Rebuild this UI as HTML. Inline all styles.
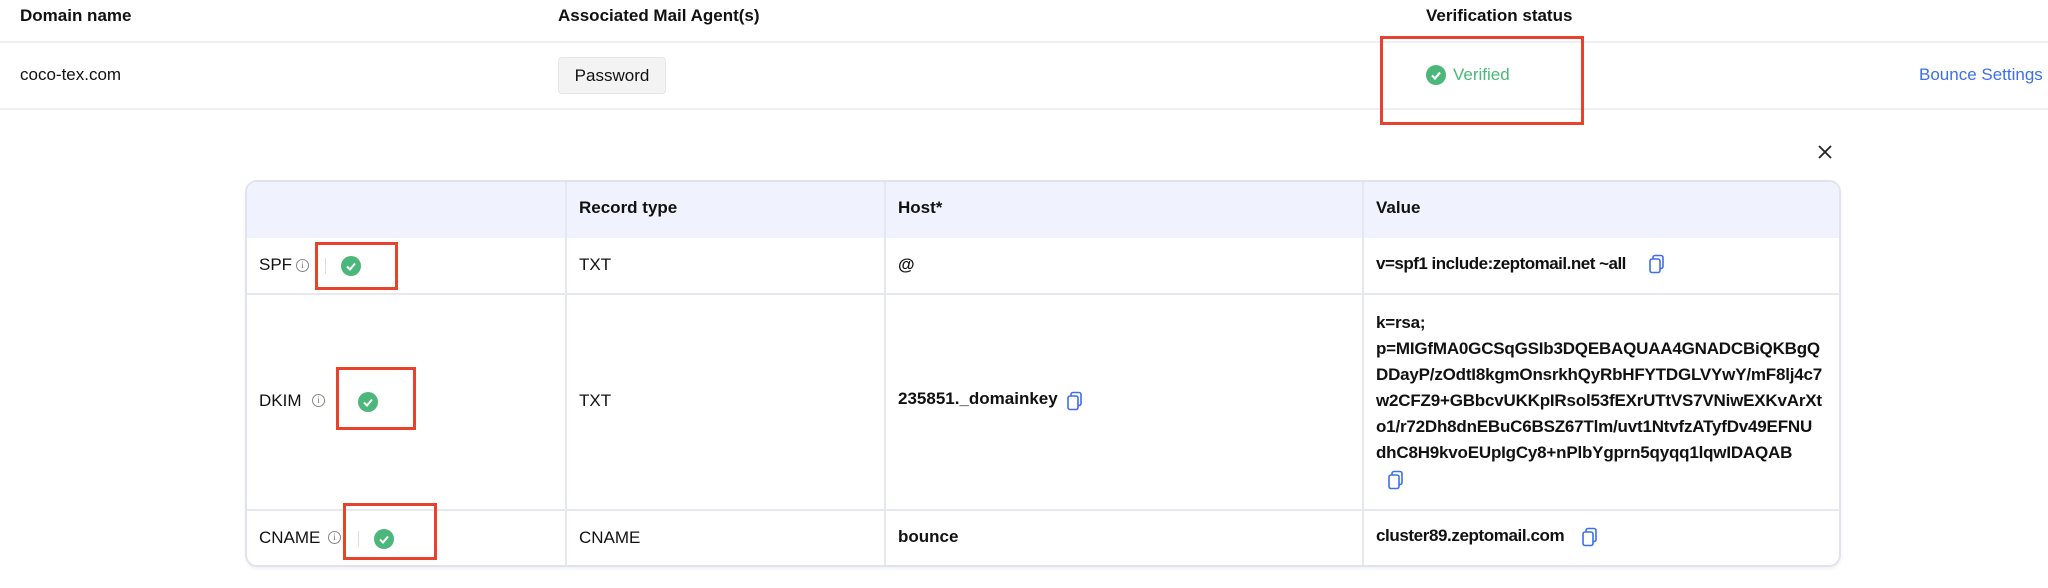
<!DOCTYPE html>
<html><head><meta charset="utf-8"><style>
body{margin:0;width:2048px;height:588px;background:#fff;font-family:"Liberation Sans",sans-serif;color:#111;position:relative;overflow:hidden;font-size:17px}
.a{position:absolute;white-space:nowrap}
.b{font-weight:bold}
.hl{position:absolute;left:0;width:2048px;height:2px;background:#eeeff2}
.red{position:absolute;border:3px solid #e8412c;box-sizing:border-box}
.chk{position:absolute;width:20px;height:20px;border-radius:50%;background:#4cb77a}
.chk svg{position:absolute;left:0;top:0}
.tbl{position:absolute;left:245px;top:180px;width:1596px;height:387px;border:2px solid #e1e4ee;border-radius:12px;box-sizing:border-box;overflow:hidden;box-shadow:0 2px 3px rgba(0,0,0,.06)}
.th{position:absolute;left:0;top:0;width:100%;height:56px;background:#f0f3fd}
.vl{position:absolute;top:0;width:2px;height:100%;background:#e6e8f0}
.rl{position:absolute;left:0;width:100%;height:2px;background:#e8e9ee}
.info{position:absolute;width:11px;height:11px;border:1px solid #888;border-radius:50%;font-size:9px;line-height:11px;text-align:center;color:#777;font-family:"Liberation Serif",serif}
.sep{position:absolute;width:1px;height:16px;background:#ddd}
</style></head><body>
<div class="a b" style="left:20px;top:6px">Domain name</div>
<div class="a b" style="left:558px;top:6px">Associated Mail Agent(s)</div>
<div class="a b" style="left:1426px;top:6px">Verification status</div>
<div class="hl" style="top:41px"></div>
<div class="a" style="left:20px;top:65px">coco-tex.com</div>
<div class="a" style="left:558px;top:57px;width:108px;height:37px;background:#f3f3f3;border:1px solid #e6e6e6;border-radius:4px;box-sizing:border-box;text-align:center;line-height:35px">Password</div>
<div class="chk" style="left:1426px;top:65px"><svg width="20" height="20"><path d="M6 10.5l3 3 5-6" stroke="#fff" stroke-width="2.2" fill="none"/></svg></div>
<div class="a" style="left:1453px;top:65px;color:#4cb77a">Verified</div>
<div class="a" style="left:1919px;top:65px;color:#3d6fe8">Bounce Settings</div>
<div class="hl" style="top:108px"></div>
<div class="red" style="left:1380px;top:36px;width:204px;height:89px"></div>
<svg class="a" style="left:1817px;top:144px" width="16" height="16"><path d="M2 2L14 14M14 2L2 14" stroke="#222" stroke-width="1.8"/></svg>

<div class="tbl">
<div class="th"></div>
<div class="vl" style="left:318px"></div>
<div class="vl" style="left:637px"></div>
<div class="vl" style="left:1115px"></div>
<div class="rl" style="top:111px"></div>
<div class="rl" style="top:327px"></div>
</div>
<div class="a b" style="left:579px;top:198px">Record type</div>
<div class="a b" style="left:898px;top:198px">Host*</div>
<div class="a b" style="left:1376px;top:198px">Value</div>

<div class="a" style="left:259px;top:255px">SPF</div>
<div class="info" style="left:296px;top:259px">i</div>
<div class="sep" style="left:325px;top:258px"></div>
<div class="chk" style="left:341px;top:256px"><svg width="20" height="20"><path d="M6 10.5l3 3 5-6" stroke="#fff" stroke-width="2" fill="none"/></svg></div>
<div class="red" style="left:315px;top:242px;width:83px;height:48px"></div>
<div class="a" style="left:579px;top:255px">TXT</div>
<div class="a b" style="left:898px;top:255px">@</div>
<div class="a b" style="left:1376px;top:254px;letter-spacing:-0.5px">v=spf1 include:zeptomail.net ~all</div>

<div class="a" style="left:259px;top:391px">DKIM</div>
<div class="info" style="left:312px;top:394px">i</div>
<div class="chk" style="left:358px;top:392px"><svg width="20" height="20"><path d="M6 10.5l3 3 5-6" stroke="#fff" stroke-width="2" fill="none"/></svg></div>
<div class="red" style="left:336px;top:367px;width:80px;height:63px"></div>
<div class="a" style="left:579px;top:391px">TXT</div>
<div class="a b" style="left:898px;top:389px">235851._domainkey</div>
<div class="a b" style="left:1376px;top:310px;line-height:26px;font-size:17px;letter-spacing:-0.2px">k=rsa;<br>p=MIGfMA0GCSqGSIb3DQEBAQUAA4GNADCBiQKBgQ<br>DDayP/zOdtI8kgmOnsrkhQyRbHFYTDGLVYwY/mF8lj4c7<br>w2CFZ9+GBbcvUKKpIRsol53fEXrUTtVS7VNiwEXKvArXt<br>o1/r72Dh8dnEBuC6BSZ67Tlm/uvt1NtvfzATyfDv49EFNU<br>dhC8H9kvoEUpIgCy8+nPlbYgprn5qyqq1lqwIDAQAB</div>

<div class="a" style="left:259px;top:528px">CNAME</div>
<div class="info" style="left:328px;top:531px">i</div>
<div class="sep" style="left:358px;top:531px"></div>
<div class="chk" style="left:374px;top:529px"><svg width="20" height="20"><path d="M6 10.5l3 3 5-6" stroke="#fff" stroke-width="2" fill="none"/></svg></div>
<div class="red" style="left:343px;top:503px;width:94px;height:57px"></div>
<div class="a" style="left:579px;top:528px">CNAME</div>
<div class="a b" style="left:898px;top:527px">bounce</div>
<div class="a b" style="left:1376px;top:526px;letter-spacing:-0.4px">cluster89.zeptomail.com</div>

<svg class="a" style="left:1648px;top:254px" width="18" height="20"><rect x="5" y="1.5" width="10" height="13" rx="2" fill="none" stroke="#3d6fe8" stroke-width="1.6"/><rect x="2" y="5" width="10" height="13.5" rx="2" fill="#fff" stroke="#3d6fe8" stroke-width="1.6"/></svg>
<svg class="a" style="left:1066px;top:391px" width="18" height="20"><rect x="5" y="1.5" width="10" height="13" rx="2" fill="none" stroke="#3d6fe8" stroke-width="1.6"/><rect x="2" y="5" width="10" height="13.5" rx="2" fill="#fff" stroke="#3d6fe8" stroke-width="1.6"/></svg>
<svg class="a" style="left:1387px;top:470px" width="18" height="20"><rect x="5" y="1.5" width="10" height="13" rx="2" fill="none" stroke="#3d6fe8" stroke-width="1.6"/><rect x="2" y="5" width="10" height="13.5" rx="2" fill="#fff" stroke="#3d6fe8" stroke-width="1.6"/></svg>
<svg class="a" style="left:1581px;top:527px" width="18" height="20"><rect x="5" y="1.5" width="10" height="13" rx="2" fill="none" stroke="#3d6fe8" stroke-width="1.6"/><rect x="2" y="5" width="10" height="13.5" rx="2" fill="#fff" stroke="#3d6fe8" stroke-width="1.6"/></svg>
</body></html>
